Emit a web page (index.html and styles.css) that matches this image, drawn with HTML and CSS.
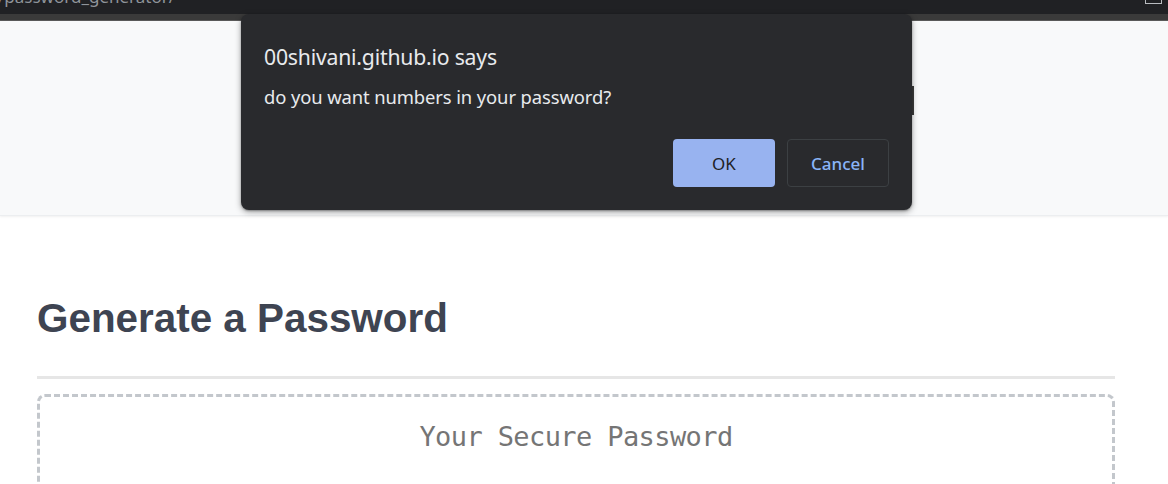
FILE: index.html
```html
<!DOCTYPE html>
<html lang="en">
<head>
<meta charset="utf-8">
<title>Password Generator</title>
<link rel="stylesheet" href="styles.css">
</head>
<body>
  <div class="chrome">
    <span class="url">/password_generator/</span>
    <span class="chrome-icon"></span>
  </div>
  <div class="strip"></div>
  <header class="page-header">
    <span class="header-mark"></span>
  </header>
  <main class="content">
    <h1 class="title">Generate a Password</h1>
    <hr class="rule">
    <div class="password-box">
      <div class="password-text">Your Secure Password</div>
    </div>
  </main>

  <div class="dialog" role="dialog">
    <div class="dialog-title">00shivani.github.io says</div>
    <div class="dialog-msg">do you want numbers in your password?</div>
    <div class="dialog-actions">
      <button class="btn btn-ok">OK</button>
      <button class="btn btn-cancel">Cancel</button>
    </div>
  </div>
</body>
</html>
```

FILE: styles.css
```css
html, body {
  margin: 0;
  padding: 0;
  background: #ffffff;
  overflow: hidden;
}
body {
  width: 1168px;
  height: 484px;
  font-family: "Liberation Sans", Arial, sans-serif;
  position: relative;
}
.chrome {
  height: 14px;
  background: #202124;
  overflow: hidden;
  position: relative;
}
.url {
  display: block;
  margin-top: -14px;
  margin-left: -2px;
  font-family: "Noto Sans", sans-serif;
  font-size: 17px;
  line-height: 22px;
  color: #8f949a;
  white-space: nowrap;
}
.chrome-icon {
  position: absolute;
  right: 6px;
  top: -6px;
  width: 15px;
  height: 8px;
  border: 1px solid #b9bcc0;
}
.strip {
  height: 6px;
  background: #3a3a3a;
  border-bottom: 1px solid #5a5a5a;
}
.page-header {
  height: 194px;
  background: #f8f9fa;
  box-shadow: 0 1px 2px rgba(0,0,0,0.06);
  border-bottom: 1px solid #eceef0;
  position: relative;
}
.header-mark {
  position: absolute;
  left: 912px;
  top: 65px;
  width: 2px;
  height: 29px;
  background: #3c3c3c;
}
.content {
  padding: 0 53px 0 37px;
}
.title {
  margin: 0;
  padding-top: 74px;
  font-size: 40.4px;
  line-height: 56px;
  font-weight: 700;
  color: #3e4452;
}
.rule {
  margin: 30px 0 0 0;
  border: 0;
  height: 3px;
  background: #e6e6e6;
}
.password-box {
  margin-top: 15px;
  height: 120px;
  border: 3px dashed #c3c7cc;
  border-radius: 8px;
}
.password-text {
  text-align: center;
  padding-top: 24px;
  font-family: "DejaVu Sans Mono", "Liberation Mono", monospace;
  font-size: 27px;
  letter-spacing: -0.6px;
  line-height: 32px;
  color: #757575;
}
.dialog {
  position: absolute;
  left: 241px;
  top: 14px;
  width: 671px;
  height: 196px;
  box-sizing: border-box;
  background: #292a2d;
  border-radius: 8px;
  box-shadow: 0 2px 6px rgba(0,0,0,0.35), 0 1px 2px rgba(0,0,0,0.3);
  padding: 28px 23px 0 23px;
  font-family: "Noto Sans", "Open Sans", sans-serif;
  color: #e8eaed;
}
.dialog-title {
  font-size: 21.2px;
  line-height: 30px;
  letter-spacing: -0.2px;
}
.dialog-msg {
  margin-top: 13px;
  font-size: 18.4px;
  line-height: 24px;
  letter-spacing: -0.1px;
}
.dialog-actions {
  display: flex;
  justify-content: flex-end;
  gap: 12px;
  margin-top: 30px;
}
.btn {
  width: 102px;
  height: 48px;
  border-radius: 4px;
  font-family: "Noto Sans", "Open Sans", sans-serif;
  font-size: 17px;
  cursor: pointer;
  box-sizing: border-box;
}
.btn-ok {
  background: #98b3f0;
  border: none;
  color: #202124;
}
.btn-cancel {
  background: transparent;
  border: 1px solid #3c4043;
  color: #8ab4f8;
  font-weight: 500;
}
```
